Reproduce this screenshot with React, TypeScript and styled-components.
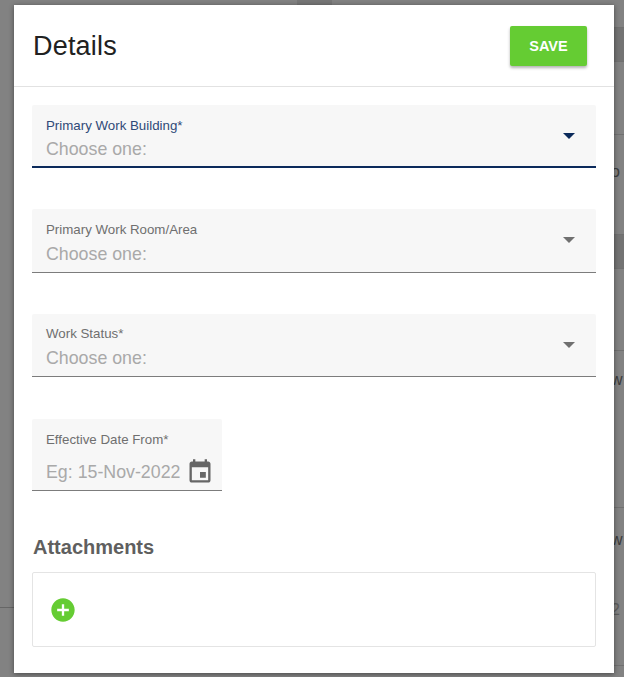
import React from "react";
import styled, { createGlobalStyle } from "styled-components";

const SANS = `"Liberation Sans", Arial, sans-serif`;

const Global = createGlobalStyle`
  html, body { margin: 0; padding: 0; width: 624px; height: 677px; overflow: hidden; }
  * { box-sizing: border-box; }
  body { font-family: ${SANS}; }
`;

const Backdrop = styled.div`
  position: relative;
  width: 624px;
  height: 677px;
  background: #828282;
  overflow: hidden;
  display: flex;
  flex-direction: column;
`;

const TopStrip = styled.div`
  height: 5px;
  flex: none;
  padding-left: 297px;
`;

const TopSegment = styled.div`
  width: 35px;
  height: 100%;
  background: #767676;
`;

const Sides = styled.div`
  flex: 1;
  display: flex;
  justify-content: space-between;
`;

const LeftStrip = styled.div`
  width: 14px;
  height: 603px;
  border-bottom: 1px solid #666;
`;

const RightStrip = styled.div`
  width: 10px;
  display: flex;
  flex-direction: column;
`;

const BackRow = styled.div<{ $h: number; $dark?: boolean; $pad?: number }>`
  height: ${(p) => p.$h}px;
  flex: none;
  padding-top: ${(p) => p.$pad ?? 0}px;
  border-bottom: 1px solid #707070;
  background: ${(p) => (p.$dark ? "#737373" : "transparent")};
  display: flex;
  flex-direction: column;
  overflow: hidden;
`;

const BackText = styled.span<{ $gap?: number; $faint?: boolean }>`
  margin: ${(p) => p.$gap ?? 0}px 0 0 -3px;
  font: 400 16px/18px ${SANS};
  color: ${(p) => (p.$faint ? "#5c5c5c" : "#3c3c3c")};
`;

const Dialog = styled.div`
  position: absolute;
  left: 14px;
  top: 5px;
  width: 600px;
  height: 668px;
  background: #fff;
  box-shadow: 0 1px 5px rgba(0, 0, 0, 0.45);
  display: flex;
  flex-direction: column;
`;

const Header = styled.header`
  height: 82px;
  flex: none;
  padding: 21px 27px 0 19px;
  border-bottom: 1px solid #e2e2e2;
  display: flex;
  justify-content: space-between;
  align-items: flex-start;
`;

const Title = styled.h1`
  margin: 3px 0 0;
  font: 400 27px/34px ${SANS};
  letter-spacing: 0.2px;
  color: #212121;
`;

const SaveButton = styled.button`
  width: 77px;
  height: 40px;
  border: 0;
  border-radius: 2px;
  background: #65cc33;
  color: #fff;
  font: 700 14.5px/40px ${SANS};
  padding: 0;
  box-shadow: 0 2px 3px rgba(0, 0, 0, 0.3);
`;

const Body = styled.div`
  padding: 18px 18px 0;
  display: flex;
  flex-direction: column;
`;

const Field = styled.div<{ $active?: boolean; $narrow?: boolean }>`
  position: relative;
  width: ${(p) => (p.$narrow ? "190px" : "564px")};
  height: ${(p) => (p.$narrow ? "72.5px" : "63.4px")};
  margin-top: ${(p) => (p.$narrow ? "0.6px" : "0")};
  margin-bottom: ${(p) => (p.$narrow ? "0" : "41px")};
  padding: ${(p) => (p.$narrow ? "14px" : "13.5px")} 14px 0;
  background: #f7f7f7;
  border-radius: 2px 2px 0 0;
  border-bottom: ${(p) => (p.$active ? "2px solid #0b2a5b" : "1px solid #7c7c7c")};
`;

const Label = styled.div<{ $active?: boolean }>`
  font: 400 13.3px/14px ${SANS};
  color: ${(p) => (p.$active ? "#2f4a78" : "#6f6f6f")};
  white-space: nowrap;
`;

const Placeholder = styled.div`
  margin-top: 4.7px;
  font: 400 17.8px/24px ${SANS};
  color: #a9a9a9;
`;

const DateRow = styled.div`
  margin-top: 13.2px;
  height: 24px;
  display: flex;
  align-items: center;
  justify-content: space-between;
  margin-right: -6px;
`;

const DateText = styled(Placeholder)`
  margin-top: 0;
  white-space: nowrap;
`;

const Caret = styled.span<{ $active?: boolean }>`
  position: absolute;
  right: 21px;
  top: 28px;
  width: 0;
  height: 0;
  border-left: 6px solid transparent;
  border-right: 6px solid transparent;
  border-top: 6px solid ${(p) => (p.$active ? "#0b2a5b" : "#707070")};
`;

const SectionTitle = styled.h2`
  margin: 43.5px 0 13.5px 1px;
  font: 700 20px/24px ${SANS};
  color: #5f5f5f;
`;

const AttachBox = styled.div`
  width: 564px;
  height: 75px;
  border: 1px solid #e4e4e4;
  border-radius: 2px;
  padding: 25px 18px 0;
`;

const Icon = styled.svg`
  display: block;
  flex: none;
`;

const AddGlyph = styled(Icon)`
  margin: -2px 0 0 -2px;
`;

function CalendarIcon() {
  return (
    <Icon width="28" height="28" viewBox="0 0 24 24" fill="#666">
      <path d="M17 12h-5v5h5v-5zM16 1v2H8V1H6v2H5c-1.11 0-1.99.9-1.99 2L3 19c0 1.1.89 2 2 2h14c1.1 0 2-.9 2-2V5c0-1.1-.9-2-2-2h-1V1h-2zm3 18H5V8h14v11z" />
    </Icon>
  );
}

function AddIcon() {
  return (
    <AddGlyph width="28" height="28" viewBox="0 0 24 24" fill="#65cc33">
      <path d="M12 2C6.48 2 2 6.48 2 12s4.48 10 10 10 10-4.48 10-10S17.52 2 12 2zm5 11h-4v4h-2v-4H7v-2h4V7h2v4h4v2z" />
    </AddGlyph>
  );
}

function SelectField({ label, active }: { label: string; active?: boolean }) {
  return (
    <Field $active={active}>
      <Label $active={active}>{label}</Label>
      <Placeholder>Choose one:</Placeholder>
      <Caret $active={active} />
    </Field>
  );
}

export default function App() {
  return (
    <Backdrop>
      <Global />
      <TopStrip>
        <TopSegment />
      </TopStrip>
      <Sides>
        <LeftStrip />
        <RightStrip>
          <BackRow $h={23} />
          <BackRow $h={34} $dark />
          <BackRow $h={73} />
          <BackRow $h={100} $pad={28}>
            <BackText>o</BackText>
          </BackRow>
          <BackRow $h={34} $dark />
          <BackRow $h={82} />
          <BackRow $h={157} $pad={20}>
            <BackText>w</BackText>
          </BackRow>
          <BackRow $h={158} $pad={23}>
            <BackText>w</BackText>
            <BackText $gap={52} $faint>2</BackText>
          </BackRow>
        </RightStrip>
      </Sides>
      <Dialog>
        <Header>
          <Title>Details</Title>
          <SaveButton>SAVE</SaveButton>
        </Header>
        <Body>
          <SelectField label="Primary Work Building*" active />
          <SelectField label="Primary Work Room/Area" />
          <SelectField label="Work Status*" />
          <Field $narrow>
            <Label>Effective Date From*</Label>
            <DateRow>
              <DateText>Eg: 15-Nov-2022</DateText>
              <CalendarIcon />
            </DateRow>
          </Field>
          <SectionTitle>Attachments</SectionTitle>
          <AttachBox>
            <AddIcon />
          </AttachBox>
        </Body>
      </Dialog>
    </Backdrop>
  );
}
